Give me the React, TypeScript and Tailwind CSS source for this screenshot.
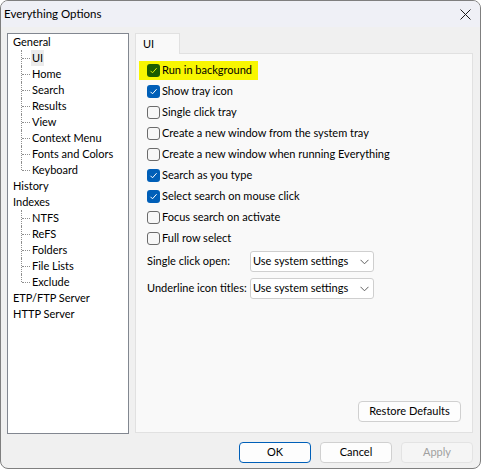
import React from 'react';

const font = { fontFamily: 'Lato, "Noto Sans", sans-serif' };

type TreeNode = { label: string; children?: string[] };

const tree: TreeNode[] = [
  { label: 'General', children: ['UI', 'Home', 'Search', 'Results', 'View', 'Context Menu', 'Fonts and Colors', 'Keyboard'] },
  { label: 'History' },
  { label: 'Indexes', children: ['NTFS', 'ReFS', 'Folders', 'File Lists', 'Exclude'] },
  { label: 'ETP/FTP Server' },
  { label: 'HTTP Server' },
];

const options = [
  { label: 'Run in background', checked: true, highlight: true },
  { label: 'Show tray icon', checked: true },
  { label: 'Single click tray', checked: false },
  { label: 'Create a new window from the system tray', checked: false },
  { label: 'Create a new window when running Everything', checked: false },
  { label: 'Search as you type', checked: true },
  { label: 'Select search on mouse click', checked: true },
  { label: 'Focus search on activate', checked: false },
  { label: 'Full row select', checked: false },
];

function Checkbox({ checked, highlight }: { checked: boolean; highlight?: boolean }) {
  if (!checked) {
    return <span className="w-[13px] h-[13px] shrink-0 rounded-[3px] border border-[#6b6b6b] bg-[#f7f7f7]" />;
  }
  return (
    <span
      className={`w-[13px] h-[13px] shrink-0 rounded-[3px] flex items-center justify-center ${
        highlight ? 'bg-[#1c5c00]' : 'bg-[#005fb8]'
      }`}
    >
      <svg width="9" height="9" viewBox="0 0 9 9">
        <path d="M1.5 4.8 L3.5 6.8 L7.6 2.2" fill="none" stroke={highlight ? '#e4ee00' : '#ffffff'} strokeWidth="1" />
      </svg>
    </span>
  );
}

function TreeChild({ label, last, selected }: { label: string; last: boolean; selected?: boolean }) {
  return (
    <div className="relative h-4 flex items-center pl-[18px] whitespace-nowrap">
      {/* dotted tree lines */}
      <span
        className={`absolute left-[8px] top-0 border-l border-dotted border-[#8f8f8f] ${last ? 'h-[8px]' : 'h-4'}`}
      />
      <span className="absolute left-[9px] top-[8px] w-[8px] border-t border-dotted border-[#8f8f8f]" />
      <span className={`px-px leading-4 ${selected ? 'bg-[#ebebeb]' : ''}`}>{label}</span>
    </div>
  );
}

function Select() {
  return (
    <div className="w-[124px] h-[21px] border border-[#cfcfcf] rounded-[3px] bg-white flex items-center justify-between pl-[2px] pr-[4px] whitespace-nowrap">
      <span>Use system settings</span>
      <svg width="9" height="6" viewBox="0 0 9 6">
        <path d="M0.5 0.8 L4.5 4.8 L8.5 0.8" fill="none" stroke="#5f5f5f" strokeWidth="1" />
      </svg>
    </div>
  );
}

function Button({ label, primary, disabled, w = 'w-[72px]' }: { label: string; primary?: boolean; disabled?: boolean; w?: string }) {
  return (
    <div
      className={`${w} h-[21px] rounded-[4px] flex items-center justify-center whitespace-nowrap ${
        primary
          ? 'border border-[#005fb8] bg-[#fdfdfd] text-black'
          : disabled
          ? 'border border-[#e3e3e3] bg-[#f5f5f5] text-[#a0a0a0]'
          : 'border border-[#d0d0d0] bg-[#fdfdfd] text-black'
      }`}
    >
      {label}
    </div>
  );
}

export default function App() {
  return (
    <div className="w-[482px] h-[470px] bg-white text-[11px] text-black" style={font}>
      <div className="w-[481px] h-[469px] rounded-[8px] border border-[#7f7f7f] bg-[#f0f0f0] overflow-hidden flex flex-col">
        {/* Title bar */}
        <div className="h-[26px] bg-[#eff0f6] flex items-center justify-between pl-[3px] pr-[9px] shrink-0">
          <span className="text-[11.5px]">Everything Options</span>
          <svg width="11" height="11" viewBox="0 0 11 11">
            <path d="M0.5 0.5 L10.5 10.5 M10.5 0.5 L0.5 10.5" stroke="#1a1a1a" strokeWidth="1" />
          </svg>
        </div>

        <div className="flex pl-[6px] pt-[5px] gap-[6px]">
          {/* Tree */}
          <div className="mt-px w-[122px] h-[401px] border border-[#828790] bg-white pl-[5px] whitespace-nowrap">
            {tree.map((node) => (
              <div key={node.label}>
                <div className="h-4 flex items-center leading-4">{node.label}</div>
                {node.children?.map((c, i) => (
                  <TreeChild key={c} label={c} last={i === node.children!.length - 1} selected={c === 'UI'} />
                ))}
              </div>
            ))}
          </div>

          {/* Tab area */}
          <div className="w-[338px] flex flex-col">
            <div className="flex">
              <div className="w-[45px] h-[21px] bg-[#f9f9f9] border border-b-0 border-[#e1e1e1] flex items-center pl-[7px] relative top-px">
                UI
              </div>
            </div>
            <div className="h-[380px] bg-[#f9f9f9] border border-[#e1e1e1] flex flex-col pl-[11px] pt-[6px] pr-[10px] pb-[10px] whitespace-nowrap">
              <div className="flex flex-col">
                {options.map((o) => (
                  <div key={o.label} className="h-[21px] flex items-center">
                    <div
                      className={`flex items-center gap-[2px] h-[19px] ${
                        o.highlight ? 'bg-[#f8f600] -ml-[8px] pl-[8px] w-[119px]' : ''
                      }`}
                    >
                      <Checkbox checked={o.checked} highlight={o.highlight} />
                      <span>{o.label}</span>
                    </div>
                  </div>
                ))}
              </div>
              <div className="mt-[2px] flex flex-col gap-[6px]">
                <div className="flex items-center">
                  <span className="w-[103px]">Single click open:</span>
                  <Select />
                </div>
                <div className="flex items-center">
                  <span className="w-[103px]">Underline icon titles:</span>
                  <Select />
                </div>
              </div>
              <div className="mt-auto flex justify-end pr-[1px]">
                <Button label="Restore Defaults" w="w-[103px]" />
              </div>
            </div>
          </div>
        </div>

        {/* Bottom buttons */}
        <div className="flex justify-end gap-[9px] pr-[7px] mt-[8px]">
          <Button label="OK" primary />
          <Button label="Cancel" />
          <Button label="Apply" disabled />
        </div>
      </div>
    </div>
  );
}
